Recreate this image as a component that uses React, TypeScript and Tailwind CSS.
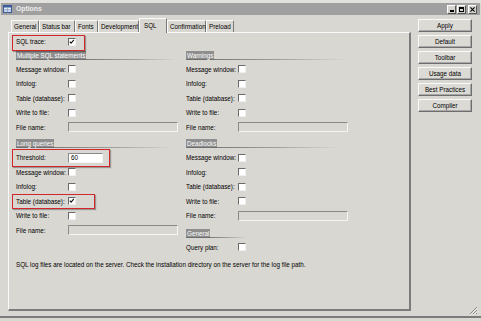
import React from "react";

const Check = ({ checked = false }: { checked?: boolean }) => (
    <span className="relative w-[8px] h-[8px] bg-white border border-t-[#6a6a6a] border-l-[#6a6a6a] border-r-[#efefef] border-b-[#efefef] shrink-0">
        {checked && (
            <svg viewBox="0 0 8 8" className="absolute inset-0 w-[6px] h-[6px]">
                <path d="M1 3.5 L2.8 5.5 L6.5 1.2" stroke="#111" strokeWidth="1.4" fill="none" />
            </svg>
        )}
    </span>
);

const Field = ({ width = 110, value = "", white = false }: { width?: number; value?: string; white?: boolean }) => (
    <span
        className={`h-[10px] border border-t-[#8a8a8a] border-l-[#8a8a8a] border-r-[#f4f4f4] border-b-[#f4f4f4] flex items-center pl-[2px] ${white ? "bg-white" : "bg-[#d9d7d1]"}`}
        style={{ width }}
    >
        {value}
    </span>
);

const Header = ({ label, line = 150 }: { label: string; line?: number }) => (
    <div className="h-[14px] flex items-center">
        <div className="flex items-end">
            <span className="bg-[#8e8e8e] text-white leading-[9px] h-[9px] px-[1px] border-b border-[#6e6e6e]">
                {label}
            </span>
            <span
                className="h-[1px] bg-gradient-to-r from-[#7a7a7a] via-[#a0a0a0] to-transparent"
                style={{ width: line }}
            />
        </div>
    </div>
);

const Row = ({ label, children }: { label: string; children?: React.ReactNode }) => (
    <div className="h-[14.5px] flex items-center">
        <span className="w-[52px] shrink-0">{label}</span>
        {children}
    </div>
);

const Mark = ({ w, h, t }: { w: number; h: number; t: number }) => (
    <span
        className="absolute left-[-4px] border-[1.5px] border-[#d2262b] shadow-[1px_1px_1px_rgba(0,0,0,0.3)]"
        style={{ width: w, height: h, top: t }}
    />
);

const Btn = ({ label }: { label: string }) => (
    <div className="h-[13px] w-[54px] flex items-center justify-center bg-[#dcdad5] border border-t-[#fafafa] border-l-[#fafafa] border-r-[#6e6e6e] border-b-[#6e6e6e] shadow-[inset_-1px_-1px_0_#a8a8a8]">
        {label}
    </div>
);

const tabs = [
    { label: "General", w: 28 },
    { label: "Status bar", w: 36 },
    { label: "Fonts", w: 23 },
    { label: "Development", w: 41 },
    { label: "SQL", w: 28, active: true },
    { label: "Confirmation", w: 39 },
    { label: "Preload", w: 28 },
];

const App = () => {
    return (
        <div className="relative w-[481px] h-[321px] overflow-hidden bg-[#d9d7d1] font-['Liberation_Sans',Arial,sans-serif] text-[6.3px] text-black flex flex-col">
            {/* title bar */}
            <div className="h-[3px] bg-[#e2e1dd]" />
            <div className="h-[12px] mx-[1px] bg-[#a0a0a0] flex items-center pl-[2px] pr-[3px]">
                <svg viewBox="0 0 9 8" className="w-[9px] h-[8px] mr-[4px]">
                    <rect x="0.5" y="0.5" width="8" height="7" fill="#e8eef8" stroke="#3a5a9a" />
                    <rect x="0.5" y="0.5" width="8" height="2" fill="#3a5a9a" />
                    <path d="M1 4.5 H8 M1 6 H8 M4.5 3 V7.5" stroke="#7a90c0" strokeWidth="0.6" />
                </svg>
                <span className="font-bold text-[#eeeeee] text-[6.8px]">Options</span>
                <div className="ml-auto flex gap-[1px]">
                    <span className="w-[9px] h-[9px] bg-[#d6d4cf] border border-t-white border-l-white border-r-[#555] border-b-[#555] flex items-end justify-center pb-[1px]">
                        <span className="w-[4px] h-[1.5px] bg-black" />
                    </span>
                    <span className="w-[9px] h-[9px] bg-[#d6d4cf] border border-t-white border-l-white border-r-[#555] border-b-[#555] flex items-center justify-center">
                        <span className="w-[5px] h-[5px] border border-black border-t-2" />
                    </span>
                    <span className="ml-[1px] w-[9px] h-[9px] bg-[#d6d4cf] border border-t-white border-l-white border-r-[#555] border-b-[#555] flex items-center justify-center">
                        <svg viewBox="0 0 6 6" className="w-[5px] h-[5px]">
                            <path d="M0.5 0.5 L5.5 5.5 M5.5 0.5 L0.5 5.5" stroke="#000" strokeWidth="1.3" />
                        </svg>
                    </span>
                </div>
            </div>

            {/* body */}
            <div className="flex flex-1 pl-[8px]">
                <div className="w-[403px] flex flex-col">
                    <div className="h-[17px] flex items-end pl-[3px]">
                        {tabs.map((t) =>
                            t.active ? (
                                <div
                                    key={t.label}
                                    className="relative z-10 h-[15px] -mb-[1px] bg-[#d9d7d1] border-t border-l border-t-[#fafafa] border-l-[#fafafa] border-r border-r-[#7a7a7a] pl-[4px] pt-[2px] rounded-t-[1px]"
                                    style={{ width: t.w }}
                                >
                                    {t.label}
                                </div>
                            ) : (
                                <div
                                    key={t.label}
                                    className="h-[12px] border-t border-l border-t-[#fafafa] border-l-[#fafafa] border-r border-r-[#7a7a7a] pl-[2px] flex items-center rounded-t-[1px]"
                                    style={{ width: t.w }}
                                >
                                    {t.label}
                                </div>
                            )
                        )}
                    </div>
                    <div className="h-[279px] border-t border-l border-t-[#fafafa] border-l-[#fafafa] border-r-2 border-b-2 border-r-[#7c7c7c] border-b-[#7c7c7c] pl-[7px] pt-[3px]">
                        <div className="relative h-[12px] flex items-center">
                            <Mark w={73} h={16} t={-1} />
                            <span className="w-[52px]">SQL trace:</span>
                            <Check checked />
                        </div>
                        <div className="flex">
                            <div className="w-[170px]">
                                <Header label="Multiple SQL statements" line={90} />
                                <Row label="Message window:"><Check /></Row>
                                <Row label="Infolog:"><Check /></Row>
                                <Row label="Table (database):"><Check /></Row>
                                <Row label="Write to file:"><Check /></Row>
                                <Row label="File name:"><Field /></Row>
                                <div className="mt-[2px]">
                                    <Header label="Long queries" line={120} />
                                </div>
                                <div className="relative">
                                    <Mark w={98} h={18} t={-1.5} />
                                    <Row label="Threshold:"><Field width={35} value="60" white /></Row>
                                </div>
                                <Row label="Message window:"><Check /></Row>
                                <Row label="Infolog:"><Check /></Row>
                                <div className="relative">
                                    <Mark w={83} h={15} t={-0.5} />
                                    <Row label="Table (database):"><Check checked /></Row>
                                </div>
                                <Row label="Write to file:"><Check /></Row>
                                <Row label="File name:"><Field /></Row>
                            </div>
                            <div className="w-[180px]">
                                <Header label="Warnings" line={132} />
                                <Row label="Message window:"><Check /></Row>
                                <Row label="Infolog:"><Check /></Row>
                                <Row label="Table (database):"><Check /></Row>
                                <Row label="Write to file:"><Check /></Row>
                                <Row label="File name:"><Field /></Row>
                                <div className="mt-[2px]">
                                    <Header label="Deadlocks" line={120} />
                                </div>
                                <Row label="Message window:"><Check /></Row>
                                <Row label="Infolog:"><Check /></Row>
                                <Row label="Table (database):"><Check /></Row>
                                <Row label="Write to file:"><Check /></Row>
                                <Row label="File name:"><Field /></Row>
                                <div className="mt-[3px]">
                                    <Header label="General" line={36} />
                                </div>
                                <Row label="Query plan:"><Check /></Row>
                            </div>
                        </div>
                        <div className="h-[14px] mt-[3px] flex items-center">
                            SQL log files are located on the server. Check the installation directory on the server for the log file path.
                        </div>
                    </div>
                </div>
                <div className="ml-[7px] mt-[4px] flex flex-col gap-[3px]">
                    <Btn label="Apply" />
                    <Btn label="Default" />
                    <Btn label="Toolbar" />
                    <Btn label="Usage data" />
                    <Btn label="Best Practices" />
                    <Btn label="Compiler" />
                </div>
            </div>

            {/* bottom edge */}
            <div className="h-[2px] bg-[#7b7b7b]" />
            <div className="h-[3px] bg-[#d9d7d1]" />
            <svg viewBox="0 0 10 10" className="absolute right-[3px] bottom-[6px] w-[10px] h-[10px]">
                <path d="M9 2 L2 9 M9 5 L5 9 M9 8 L8 9" stroke="#8a8a8a" strokeWidth="1" />
                <path d="M9.5 3 L3 9.5 M9.5 6 L6 9.5" stroke="#fafafa" strokeWidth="0.6" />
            </svg>
        </div>
    );
};

export default App;
